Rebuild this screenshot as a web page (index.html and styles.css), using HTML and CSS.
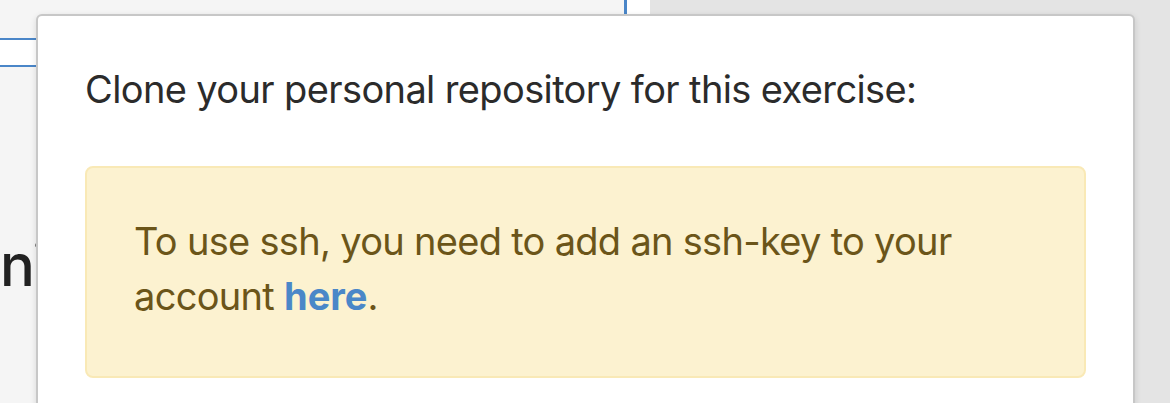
FILE: index.html
```html
<!DOCTYPE html>
<html lang="en">

<head>
    <meta charset="UTF-8">
    <meta name="viewport" content="width=device-width, initial-scale=1.0">
    <title>Clone repository</title>
    <link rel="stylesheet" href="styles.css">
</head>

<body>
    <div class="page">
        <main class="main">
            <div class="search-box"></div>
            <h2 class="page-title">ni</h2>
        </main>
        <div class="gutter"></div>
        <aside class="sidebar"></aside>
    </div>

    <div class="modal">
        <div class="modal-body">
            <p class="lead-text">Clone your personal repository for this exercise:</p>
            <div class="alert alert-warning">
                To use ssh, you need to add an ssh-key to your account <a href="#" class="alert-link">here</a>.
            </div>
        </div>
    </div>
</body>

</html>
```
FILE: styles.css
```css
html, body {
    margin: 0;
    padding: 0;
    height: 100%;
    overflow: hidden;
}

body {
    font-family: 'Inter', 'Noto Sans', sans-serif;
    color: #333;
    background-color: #e4e4e4;
}

.page {
    display: flex;
    height: 100%;
}

.main {
    width: 624px;
    background-color: #f5f5f5;
    border-right: 3px solid #4a86c8;
    overflow: hidden;
}

.gutter {
    width: 23px;
    background-color: #fff;
}

.sidebar {
    flex: 1;
    background-color: #e4e4e4;
}

.search-box {
    margin-top: 38px;
    height: 25px;
    background-color: #fff;
    border-top: 2px solid #4a86c8;
    border-bottom: 2px solid #4a86c8;
}

.page-title {
    margin: 164px 0 0 0;
    font-size: 58px;
    font-weight: 500;
    line-height: 1.2;
    letter-spacing: -3px;
    color: #222;
    white-space: nowrap;
}

.modal {
    position: absolute;
    top: 14px;
    left: 36px;
    width: 1099px;
    height: 440px;
    box-sizing: border-box;
    background-color: #fff;
    border: 2px solid rgba(0, 0, 0, 0.22);
    border-radius: 6px;
    box-shadow: 0px 2px 6px rgba(0, 0, 0, 0.12);
}

.modal-body {
    padding: 46px 47px;
}

.lead-text {
    margin: 0 0 49px 0;
    font-size: 38px;
    line-height: 55px;
    letter-spacing: -0.62px;
    color: #2b2b2b;
}

.alert {
    padding: 46px 47px 52px 47px;
    border: 2px solid #f9e9b6;
    border-radius: 8px;
    font-size: 38px;
    line-height: 55px;
    letter-spacing: -0.7px;
}

.alert-warning {
    background-color: #fcf2d0;
    color: #6b5519;
}

.alert-link {
    color: #4a87c8;
    font-weight: 700;
    letter-spacing: 0;
    text-decoration: none;
}
```
